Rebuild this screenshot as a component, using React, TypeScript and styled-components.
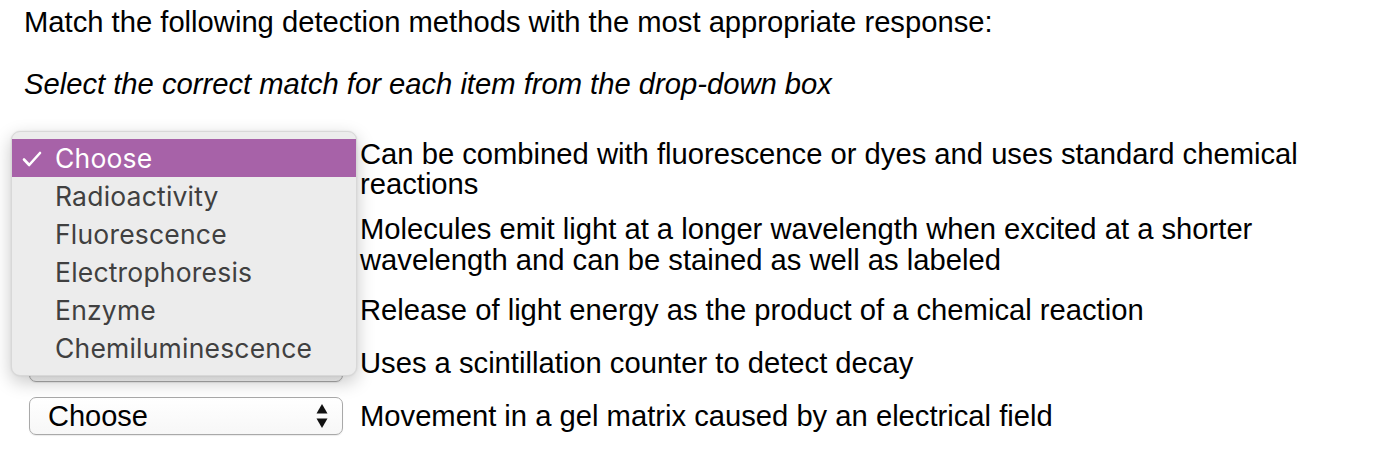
import * as React from "react";
import styled, { createGlobalStyle } from "styled-components";

const GlobalStyle = createGlobalStyle`
  html, body {
    margin: 0;
    padding: 0;
    background: #ffffff;
  }
  body {
    font-family: "Liberation Sans", Arial, sans-serif;
    color: #000000;
  }
`;

const SPage = styled.div`
  padding: 7px 0 0 24px;
  width: 1376px;
  height: 461px;
  overflow: hidden;
`;

const SPrompt = styled.p<{ italic?: boolean }>`
  margin: 0;
  font-size: 29.2px;
  line-height: 30px;
  white-space: nowrap;
  font-style: ${(p) => (p.italic ? "italic" : "normal")};
`;

const SIntro = styled.div`
  display: flex;
  flex-direction: column;
  gap: 32px;
`;

const SList = styled.div`
  position: relative;
  margin-top: 40px;
  display: flex;
  flex-direction: column;
  gap: 15px;
`;

const SRow = styled.div`
  display: flex;
  align-items: center;
  gap: 17px;
  padding-left: 5px;
  min-height: 38px;
`;

const SSelect = styled.div`
  flex: 0 0 auto;
  box-sizing: border-box;
  width: 314px;
  height: 38px;
  display: flex;
  align-items: center;
  justify-content: space-between;
  padding: 0 14px 0 18px;
  border: 1px solid #a9a9a9;
  border-radius: 7px;
  background: linear-gradient(#ffffff, #f7f7f7);
  box-shadow: 0 1px 1px rgba(0, 0, 0, 0.08);
  font-size: 29px;
  color: #000;
`;

const SAnswer = styled.div<{ lineHeight?: number }>`
  font-size: 29.2px;
  line-height: ${(p) => p.lineHeight ?? 30}px;
  max-width: 980px;
`;

// open popup of the first select, drawn over the rows below it
const SMenu = styled.ul`
  position: absolute;
  left: -13px;
  top: -8px;
  box-sizing: border-box;
  width: 346px;
  margin: 0;
  padding: 7px 0 8px;
  list-style: none;
  background: #ececec;
  border: 1px solid #d8d8d8;
  border-radius: 9px;
  box-shadow: 0 6px 18px rgba(0, 0, 0, 0.22), 0 0 2px rgba(0, 0, 0, 0.1);
  font-family: Inter, "Liberation Sans", sans-serif;
  z-index: 2;
`;

const SMenuItem = styled.li<{ selected?: boolean }>`
  position: relative;
  height: 38px;
  display: flex;
  align-items: center;
  padding-left: 43px;
  font-size: 26.5px;
  letter-spacing: 0.2px;
  color: ${(p) => (p.selected ? "#ffffff" : "#404040")};
  background: ${(p) => (p.selected ? "#a762a8" : "transparent")};
`;

const SCheck = styled.svg`
  position: absolute;
  left: 10px;
  top: 12px;
`;

const Arrows = () => (
  <svg width="12" height="26" viewBox="0 0 12 26">
    <path d="M6 1 L11.5 10.5 H0.5 Z" fill="#111" />
    <path d="M6 25 L11.5 15.5 H0.5 Z" fill="#111" />
  </svg>
);

const Check = () => (
  <SCheck width="20" height="16" viewBox="0 0 20 16">
    <path
      d="M2 8.5 L7.2 14 L18 2"
      fill="none"
      stroke="#ffffff"
      strokeWidth="2.6"
      strokeLinecap="round"
      strokeLinejoin="round"
    />
  </SCheck>
);

const answers = [
  { text: "Can be combined with fluorescence or dyes and uses standard chemical reactions", lh: 30 },
  {
    text: "Molecules emit light at a longer wavelength when excited at a shorter wavelength and can be stained as well as labeled",
    lh: 31
  },
  { text: "Release of light energy as the product of a chemical reaction", lh: 30 },
  { text: "Uses a scintillation counter to detect decay", lh: 30 },
  { text: "Movement in a gel matrix caused by an electrical field", lh: 30 }
];

const options = [
  "Choose",
  "Radioactivity",
  "Fluorescence",
  "Electrophoresis",
  "Enzyme",
  "Chemiluminescence"
];

export default function App() {
  return (
    <SPage>
      <GlobalStyle />
      <SIntro>
        <SPrompt>
          Match the following detection methods with the most appropriate response:
        </SPrompt>
        <SPrompt italic>
          Select the correct match for each item from the drop-down box
        </SPrompt>
      </SIntro>
      <SList>
        {answers.map((a) => (
          <SRow key={a.text}>
            <SSelect>
              <span>Choose</span>
              <Arrows />
            </SSelect>
            <SAnswer lineHeight={a.lh}>{a.text}</SAnswer>
          </SRow>
        ))}
        <SMenu>
          {options.map((opt, i) => (
            <SMenuItem key={opt} selected={i === 0}>
              {i === 0 && <Check />}
              {opt}
            </SMenuItem>
          ))}
        </SMenu>
      </SList>
    </SPage>
  );
}
